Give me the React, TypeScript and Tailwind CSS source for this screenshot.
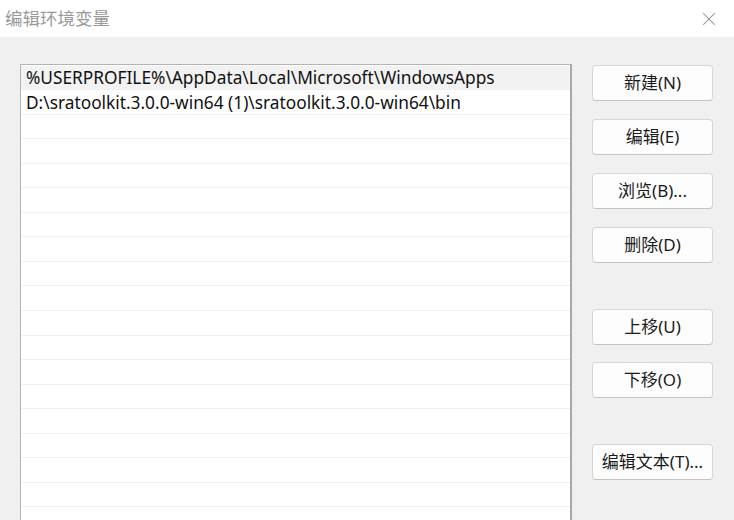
import { X } from 'lucide-react'

const paths = [
  '%USERPROFILE%\\AppData\\Local\\Microsoft\\WindowsApps',
  'D:\\sratoolkit.3.0.0-win64 (1)\\sratoolkit.3.0.0-win64\\bin',
]

const font = { fontFamily: '"Segoe UI", "Noto Sans", "Noto Sans CJK SC", sans-serif' }

function Btn({ label, className = '' }: { label: string; className?: string }) {
  return (
    <button
      className={`h-[36px] w-[121px] rounded-[4px] border border-[#d6d6d6] border-b-[#c4c4c4] bg-[#fdfdfd] text-[17px] text-[#1b1b1b] ${className}`}
    >
      {label}
    </button>
  )
}

export default function App() {
  const rows = Array.from({ length: 19 }, (_, i) => paths[i] ?? '')

  return (
    <div className="flex h-[520px] w-[734px] flex-col overflow-hidden" style={font}>
      {/* Title bar */}
      <div className="flex h-[37px] shrink-0 items-center justify-between bg-white pl-[5px] pr-[14px]">
        <span className="text-[17.5px] text-[#9a9a9a]">编辑环境变量</span>
        <X className="h-[22px] w-[22px] text-[#8a8a8a]" strokeWidth={1.1} />
      </div>

      {/* Body */}
      <div className="flex flex-1 bg-[#f0f0f0] pl-[20px] pt-[27px]">
        <div className="w-[552px] overflow-hidden border border-[#b4b4b4] border-r-2 border-r-[#a8a8a8] bg-white pt-[0.5px]">
          {rows.map((text, i) => (
            <div
              key={i}
              className={`flex h-[24.55px] items-center border-b border-[#f0f0f0] pl-[5px] pt-[1px] text-[17.3px] leading-none text-[#111] ${
                i === 0 ? 'bg-[#f2f2f2]' : ''
              }`}
            >
              {text}
            </div>
          ))}
        </div>

        <div className="ml-[20px] flex flex-col pt-[1px]">
          <Btn label="新建(N)" />
          <Btn label="编辑(E)" className="mt-[18px]" />
          <Btn label="浏览(B)..." className="mt-[18px]" />
          <Btn label="删除(D)" className="mt-[18px]" />
          <Btn label="上移(U)" className="mt-[46px]" />
          <Btn label="下移(O)" className="mt-[17px]" />
          <Btn label="编辑文本(T)..." className="mt-[46px]" />
        </div>
      </div>
    </div>
  )
}
